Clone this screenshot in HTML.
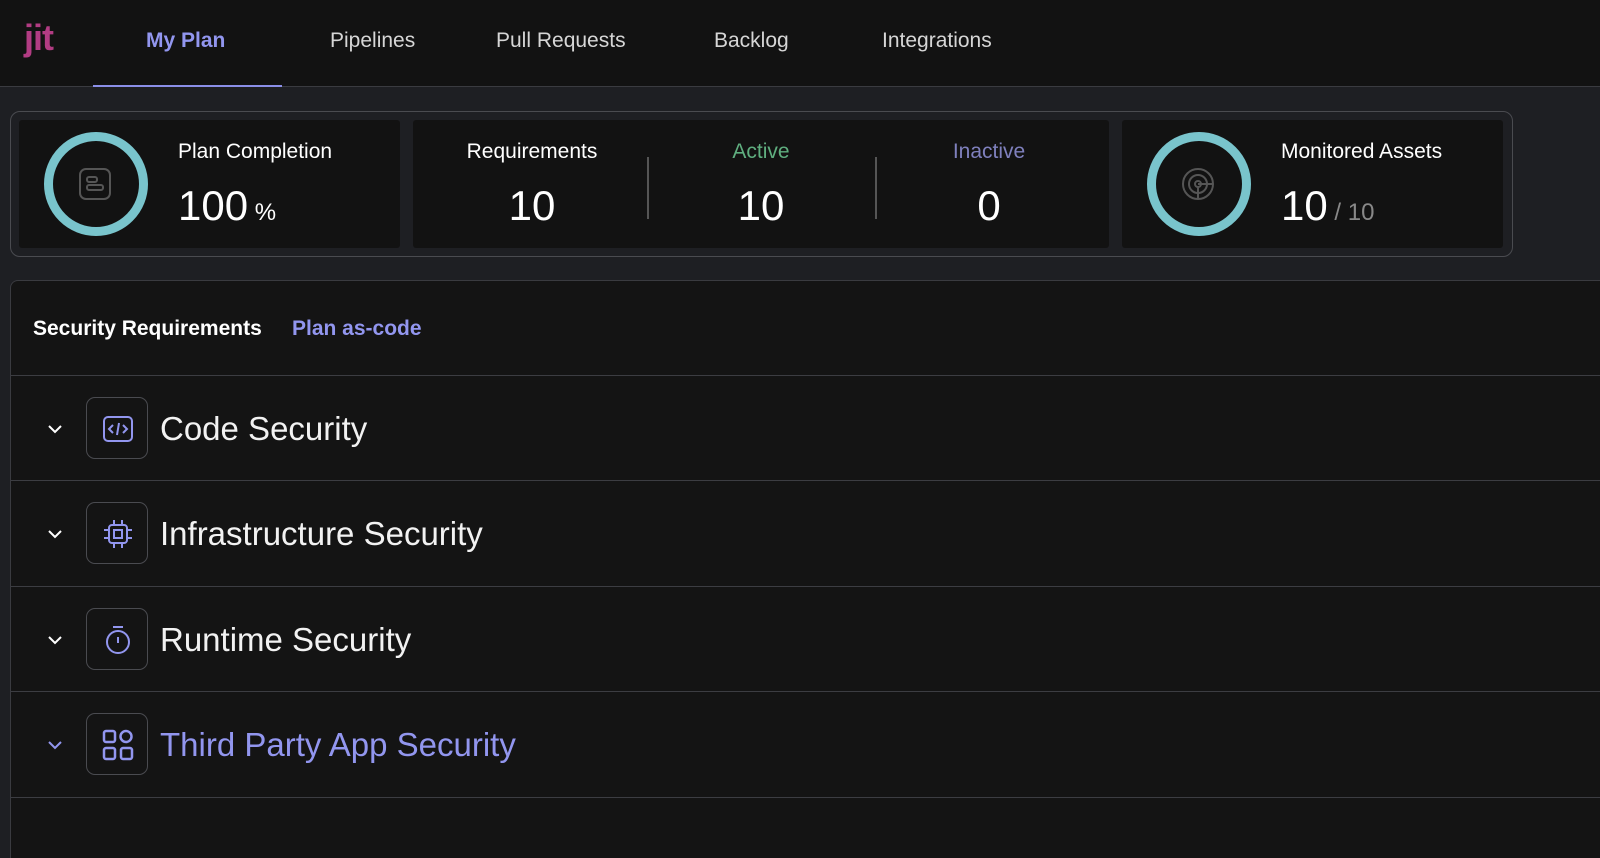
<!DOCTYPE html>
<html><head><meta charset="utf-8"><style>
*{box-sizing:border-box;margin:0;padding:0}
html,body{background:#1e1f23;width:1600px;height:858px;overflow:hidden}
#w{position:relative;width:1600px;height:858px;overflow:hidden;font-family:"Liberation Sans",sans-serif;color:#fff}
.nav{position:absolute;left:0;top:0;width:1600px;height:87px;background:#121212;border-bottom:1px solid #3a3b40}
.logo{position:absolute;left:24px;top:17px;font-size:36px;font-weight:bold;color:#b23c83;letter-spacing:-1px}
.tab{position:absolute;top:29px;font-size:21px;color:#d6d6d6}
.ul{position:absolute;left:93px;top:85px;width:189px;height:2px;background:#8b8fe8}
.outer{position:absolute;left:10px;top:111px;width:1503px;height:146px;border:1.5px solid #4a4b50;border-radius:10px}
.card{position:absolute;top:120px;height:128px;background:#121212;border-radius:3px}
.ring{position:absolute;width:104px;height:104px;border-radius:50%;border:9px solid #79c4cc;top:12px}
.lbl{position:absolute;font-size:21px}
.big{position:absolute;font-size:42px}
.panel{position:absolute;left:10px;top:280px;width:1590px;height:578px;background:#141414;border:1.5px solid #3a3b40;border-right:none;border-bottom:none;border-radius:8px 0 0 0}
.row{position:absolute;left:0;width:1590px;height:106px;border-top:1.5px solid #3c3d42}
.chev{position:absolute;left:35px;top:44px}
.ib{position:absolute;left:75px;top:21px;width:62px;height:62px;border:1.5px solid #4a4b50;border-radius:9px}
.ib svg{position:absolute;left:14px;top:14px}
.t{position:absolute;left:149px;top:34px;font-size:33px;color:#f2f2f2}
</style></head><body><div id="w">
<div class="nav">
<div class="logo">jit</div>
<div class="tab" style="left:146px;color:#9296ef;font-weight:bold">My Plan</div>
<div class="tab" style="left:330px">Pipelines</div>
<div class="tab" style="left:496px">Pull Requests</div>
<div class="tab" style="left:714px">Backlog</div>
<div class="tab" style="left:882px">Integrations</div>
<div class="ul"></div>
</div>
<div class="outer"></div>
<div class="card" style="left:19px;width:381px">
<div class="ring" style="left:25px"></div>
<svg style="position:absolute;left:58px;top:46px" width="36" height="36" viewBox="0 0 36 36" fill="none" stroke="#555" stroke-width="2"><rect x="3" y="3" width="30" height="30" rx="6"/><rect x="10" y="11" width="10" height="5" rx="2"/><rect x="10" y="19" width="16" height="5" rx="2"/></svg>
<div class="lbl" style="left:159px;top:20px">Plan Completion</div>
<div class="big" style="left:159px;top:62px">100<span style="font-size:24px"> %</span></div>
</div>
<div class="card" style="left:413px;width:696px">
<div class="lbl" style="left:0;width:238px;text-align:center;top:20px">Requirements</div>
<div class="big" style="left:0;width:238px;text-align:center;top:62px">10</div>
<div style="position:absolute;left:234px;top:37px;width:1.5px;height:62px;background:#555"></div>
<div class="lbl" style="left:234px;width:228px;text-align:center;top:20px;color:#5fae7f">Active</div>
<div class="big" style="left:234px;width:228px;text-align:center;top:62px">10</div>
<div style="position:absolute;left:462px;top:37px;width:1.5px;height:62px;background:#555"></div>
<div class="lbl" style="left:462px;width:228px;text-align:center;top:20px;color:#7f80bd">Inactive</div>
<div class="big" style="left:462px;width:228px;text-align:center;top:62px">0</div>
</div>
<div class="card" style="left:1122px;width:381px">
<div class="ring" style="left:25px"></div>
<svg style="position:absolute;left:58px;top:46px" width="36" height="36" viewBox="0 0 36 36" fill="none" stroke="#555" stroke-width="2"><circle cx="18" cy="18" r="15"/><circle cx="18" cy="18" r="9"/><circle cx="18" cy="18" r="3"/><path d="M18 21v12M18 18h15"/></svg>
<div class="lbl" style="left:159px;top:20px">Monitored Assets</div>
<div class="big" style="left:159px;top:62px">10<span style="font-size:24px;color:#888"> / 10</span></div>
</div>
<div class="panel">
<div style="position:absolute;left:22px;top:36px;font-size:21px;font-weight:bold">Security Requirements</div>
<div style="position:absolute;left:281px;top:36px;font-size:21px;font-weight:bold;color:#9296ef">Plan as-code</div>
<div class="row" style="top:94px"><svg class="chev" width="18" height="18" viewBox="0 0 18 18"><path d="M3 6l6 6 6-6" fill="none" stroke="#fff" stroke-width="2"/></svg><div class="ib"><svg width="34" height="34" viewBox="0 0 34 34" fill="none" stroke="#9296ef" stroke-width="2"><rect x="3" y="5" width="28" height="24" rx="4"/><path d="M12 13l-4 4 4 4M22 13l4 4-4 4M18 11l-2 12"/></svg></div><div class="t">Code Security</div></div>
<div class="row" style="top:199px"><svg class="chev" width="18" height="18" viewBox="0 0 18 18"><path d="M3 6l6 6 6-6" fill="none" stroke="#fff" stroke-width="2"/></svg><div class="ib"><svg width="34" height="34" viewBox="0 0 34 34" fill="none" stroke="#9296ef" stroke-width="2"><rect x="8" y="8" width="18" height="18" rx="3"/><rect x="13" y="13" width="8" height="8"/><path d="M13 3v5M21 3v5M13 26v5M21 26v5M3 13h5M3 21h5M26 13h5M26 21h5"/></svg></div><div class="t">Infrastructure Security</div></div>
<div class="row" style="top:305px"><svg class="chev" width="18" height="18" viewBox="0 0 18 18"><path d="M3 6l6 6 6-6" fill="none" stroke="#fff" stroke-width="2"/></svg><div class="ib"><svg width="34" height="34" viewBox="0 0 34 34" fill="none" stroke="#9296ef" stroke-width="2"><circle cx="17" cy="19" r="11"/><path d="M12 4h10M17 14v6"/></svg></div><div class="t">Runtime Security</div></div>
<div class="row" style="top:410px"><svg class="chev" width="18" height="18" viewBox="0 0 18 18"><path d="M3 6l6 6 6-6" fill="none" stroke="#9296ef" stroke-width="2"/></svg><div class="ib"><svg width="34" height="34" viewBox="0 0 34 34" fill="none" stroke="#9296ef" stroke-width="2.5"><rect x="3" y="3" width="11" height="11" rx="2"/><circle cx="25" cy="8.5" r="5.5"/><rect x="3" y="20" width="11" height="11" rx="2"/><rect x="20" y="20" width="11" height="11" rx="2"/></svg></div><div class="t" style="color:#9296ef">Third Party App Security</div></div>
<div class="row" style="top:516px;height:60px"></div>
</div>
</div></body></html>
